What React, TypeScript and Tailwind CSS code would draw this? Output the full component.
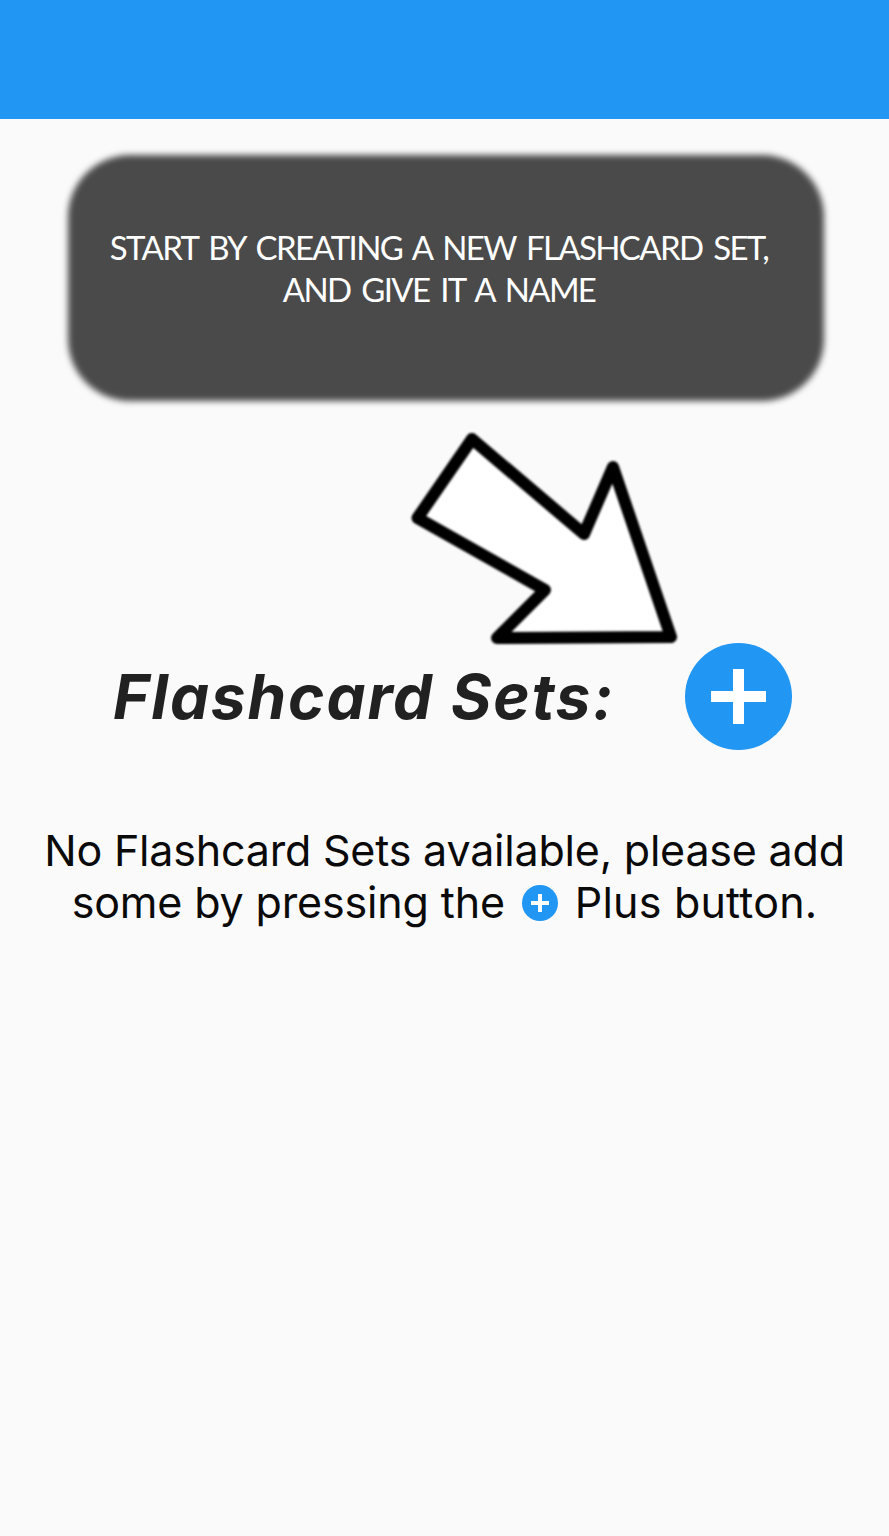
export default function App() {
  return (
    <div className="min-h-[1536px] bg-[#fafafa] flex flex-col font-['Inter',sans-serif]">
      <div className="h-[119px] bg-[#2196f3]" />
      <div className="relative mt-[36px] ml-[68px] w-[756px] h-[246px] flex justify-center pt-[71px] pr-[14px]">
        <div className="absolute inset-0 rounded-[62px] bg-[#4a4a4a] blur-[3px]" />
        <p className="relative text-white text-center uppercase font-['Lato',sans-serif] text-[33px] leading-[42px] tracking-[-1.65px] [word-spacing:4px]">
          Start by creating a new flashcard set,<br />and give it a name
        </p>
      </div>
      <svg className="ml-[400px] mt-[24px] block" width="290" height="222" viewBox="400 425 290 222" style={{ filter: "blur(1px)" }}>
        <path d="M472 439 L584 534 L613 467 L671 637 L497 638 L545 590 L417.5 518 Z" fill="#fff" stroke="#000" strokeWidth="12" strokeLinejoin="round" />
      </svg>
      <div className="flex items-center h-[107px] mt-[-4px]">
        <h1 className="ml-[113px] w-[572px] text-[62px] font-bold italic text-[#212121] whitespace-nowrap tracking-[1.9px]">Flashcard Sets:</h1>
        <div className="w-[107px] h-[107px] rounded-full bg-[#2196f3] flex items-center justify-center">
          <svg width="55" height="55" viewBox="0 0 55 55"><path d="M22 0h11v22h22v11H33v22H22V33H0V22h22z" fill="#fff" /></svg>
        </div>
      </div>
      <div className="mt-[74px] text-center text-[43px] leading-[52px] text-[#0a0a0a] tracking-[-0.2px]">
        <p>No Flashcard Sets available, please add</p>
        <p className="flex items-center justify-center gap-[17px]">
          <span className="tracking-[-0.15px]">some by pressing the</span>
          <span className="w-[36px] h-[36px] mt-[2px] rounded-full bg-[#2196f3] flex items-center justify-center">
            <svg width="20" height="20" viewBox="0 0 20 20"><path d="M8 1h4v7h7v4h-7v7H8v-7H1V8h7z" fill="#fff" /></svg>
          </span>
          <span className="tracking-[0.2px]">Plus button.</span>
        </p>
      </div>
    </div>
  );
}
